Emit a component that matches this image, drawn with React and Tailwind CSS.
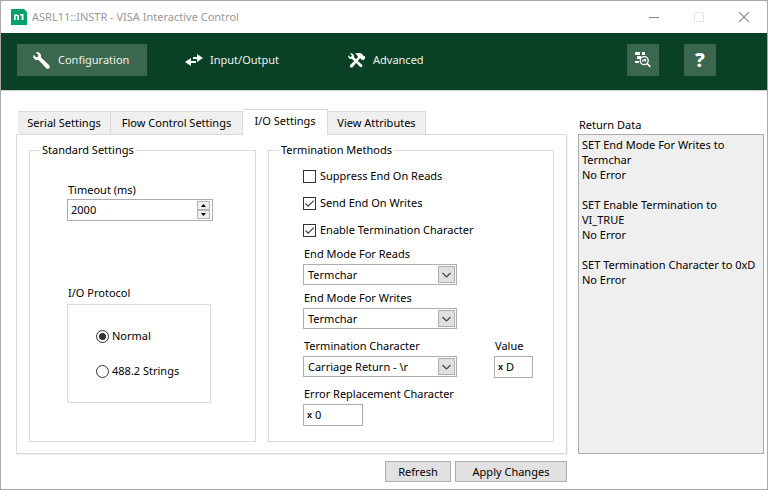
import React from 'react';

const WrenchIcon = () => (
  <svg width="17" height="17" viewBox="0 0 16 16" fill="#fff" aria-hidden="true">
    <path d="M2.6 0.5 L5 2.9 L4.6 4.6 L2.9 5 L0.5 2.6 C-0.1 4.4 0.3 5.8 1.3 6.7 C2.4 7.7 3.7 7.9 5 7.4 L12.4 15.2 C13.2 16 14.4 16 15.2 15.2 C16 14.4 16 13.2 15.2 12.4 L7.4 5 C7.9 3.7 7.7 2.3 6.7 1.3 C5.7 0.3 4.4 0 2.6 0.5 Z" />
  </svg>
);

const ArrowsIcon = () => (
  <svg width="18" height="12" viewBox="0 0 18 12" fill="#fff" aria-hidden="true">
    <path d="M12 0 L18 4 L12 8 V5 H8 V3 H12 Z" />
    <path d="M6 4 L0 8 L6 12 V9 H11 V7 H6 Z" />
  </svg>
);

const ToolsIcon = () => (
  <svg width="17" height="15" viewBox="0 0 17 15" fill="#fff" aria-hidden="true">
    <path d="M2 0.4 L3.8 2.2 L3.3 3.6 L2 4 L0.3 2.3 C-0.2 4.6 1.6 6.6 4 6 L12 13.8 C12.7 14.4 13.5 14.3 14 13.8 C14.6 13.2 14.6 12.4 14 11.8 L6 4.2 C6.6 1.8 4.4 -0.3 2 0.4 Z" />
    <path d="M7 0.8 C9.6 -0.3 12.8 -0.1 14.6 1.6 L15.4 2.7 L17 3.6 V5.4 L15.4 7.2 L13.8 6.8 L12.6 5.6 L11.8 5.6 L4.8 13.9 C4 14.8 2.8 14.7 2.2 14 C1.5 13.3 1.7 12.4 2.4 11.8 L9.8 4.4 C9.9 2.7 8.8 1.6 7 0.8 Z" />
  </svg>
);

const TraceIcon = () => (
  <svg width="16" height="16" viewBox="0 0 16 16" fill="#fff" aria-hidden="true">
    <path d="M0 0 H5 V3 H0 Z M7 0 H10 V3 H7 Z M2 4 H6 V7 H2 Z M0 9 H4 V11 H0 Z" />
    <circle cx="9.2" cy="8.6" r="4" fill="#3b674f" stroke="#fff" strokeWidth="1.3" />
    <path d="M7 9.5 V8 H8.5 V7 H11 V9.5 H9.5 V8.5 H8.5 V9.5 Z" />
    <path d="M12 11.4 L15.4 15" stroke="#fff" strokeWidth="1.6" />
  </svg>
);

const LogoIcon = () => (
  <svg width="16" height="16" viewBox="0 0 16 16" aria-hidden="true">
    <path d="M0 0 H13 L16 3 V16 H0 Z" fill="#03a06c" />
    <path d="M3 5.5 H6 C7.3 5.5 8 6.2 8 7.5 V11 H6.3 V7 H4.7 V11 H3 Z" fill="#fff" />
    <path d="M9 5 H12.5 V11 H10.6 V6.6 H9 Z" fill="#fff" />
  </svg>
);

const NAV_ITEMS = [
  { label: 'Configuration', icon: WrenchIcon, className: 'w-[130px] bg-[#3b674f]' },
  { label: 'Input/Output', icon: ArrowsIcon, className: 'w-[141px]' },
  { label: 'Advanced', icon: ToolsIcon, className: 'w-[130px]' },
];

const TABS = [
  { label: 'Serial Settings', className: 'w-[93px]' },
  { label: 'Flow Control Settings', className: 'w-[132px]' },
  { label: 'I/O Settings', className: 'w-[85px]', active: true },
  { label: 'View Attributes', className: 'w-[98px]' },
];

const RETURN_DATA = `SET End Mode For Writes to
Termchar
No Error

SET Enable Termination to
VI_TRUE
No Error

SET Termination Character to 0xD
No Error`;

function TitleBar() {
  return (
    <div className="flex h-8 items-center bg-white pl-[10px] pr-[18px] text-[#999]">
      <LogoIcon />
      <h1 className="ml-[5px] flex-1">ASRL11::INSTR - VISA Interactive Control</h1>
      <div className="flex items-center gap-[35px]">
        <button type="button" aria-label="Minimize">
          <svg width="10" height="10" viewBox="0 0 10 10"><path d="M0 5.5 H10" stroke="#888" /></svg>
        </button>
        <button type="button" aria-label="Maximize" disabled>
          <svg width="10" height="10" viewBox="0 0 10 10"><path d="M0.5 0.5 H9.5 V9.5 H0.5 Z" fill="none" stroke="#e6e6e6" /></svg>
        </button>
        <button type="button" aria-label="Close">
          <svg width="10" height="10" viewBox="0 0 10 10"><path d="M0 0 L10 10 M10 0 L0 10" stroke="#888" strokeWidth="1.1" /></svg>
        </button>
      </div>
    </div>
  );
}

function Toolbar() {
  return (
    <header className="flex h-[58px] items-center border-b border-[#d0d0d0] bg-[#0a4025] pb-[3px] pl-4 pr-[51px]">
      <nav className="flex flex-1 gap-[22px]">
        {NAV_ITEMS.map(({ label, icon: Icon, className }) => (
          <button key={label} type="button" className={`flex h-8 items-center pl-4 text-[#eef3f0] ${className}`}>
            <span className="flex w-[25px]"><Icon /></span>
            {label}
          </button>
        ))}
      </nav>
      <div className="flex gap-[25px]">
        <button type="button" aria-label="Trace" className="flex size-8 items-center justify-center bg-[#3b674f]">
          <TraceIcon />
        </button>
        <button type="button" aria-label="Help" className="flex size-8 items-center justify-center bg-[#3b674f] text-xl font-extrabold text-white">
          ?
        </button>
      </div>
    </header>
  );
}

function Group({ title, className, bodyClassName, children }) {
  return (
    <fieldset className={`border border-[#dadada] ${className}`}>
      <legend className="ml-[10px] px-[2px] leading-4">{title}</legend>
      <div className={bodyClassName}>{children}</div>
    </fieldset>
  );
}

function Check({ id, label, defaultChecked }) {
  return (
    <div className="flex items-center gap-1">
      <span className="grid size-[13px]">
        <input
          id={id}
          type="checkbox"
          defaultChecked={defaultChecked}
          className="peer col-start-1 row-start-1 size-[13px] appearance-none border border-[#333] bg-white"
        />
        <svg
          viewBox="0 0 13 13"
          className="pointer-events-none invisible col-start-1 row-start-1 size-[13px] peer-checked:visible"
        >
          <path d="M2.5 6.5 L5.2 9.2 L10.8 3.6" fill="none" stroke="#444" strokeWidth="1.2" />
        </svg>
      </span>
      <label htmlFor={id}>{label}</label>
    </div>
  );
}

function Radio({ id, label, defaultChecked }) {
  return (
    <div className="flex items-center gap-[3px]">
      <input
        id={id}
        type="radio"
        name="protocol"
        defaultChecked={defaultChecked}
        className="size-[13px] appearance-none rounded-full border border-[#333] bg-white bg-clip-content p-[2px] checked:bg-[#333]"
      />
      <label htmlFor={id}>{label}</label>
    </div>
  );
}

function Select({ id, label, options }) {
  return (
    <div className="flex w-[154px] flex-col gap-[2px]">
      <label htmlFor={id} className="pl-px">{label}</label>
      <div className="grid h-[21px] items-center border border-[#abadb3] bg-white">
        <select id={id} className="col-start-1 row-start-1 w-full appearance-none pl-1 pr-5 leading-4">
          {options.map((option) => (
            <option key={option}>{option}</option>
          ))}
        </select>
        <span className="pointer-events-none col-start-1 row-start-1 mr-px flex h-[17px] w-[17px] items-center justify-center justify-self-end border border-[#abadb3] bg-[#e1e1e1]">
          <svg width="9" height="6" viewBox="0 0 9 6"><path d="M0.5 1 L4.5 5 L8.5 1" fill="none" stroke="#444" strokeWidth="1.2" /></svg>
        </span>
      </div>
    </div>
  );
}

function HexInput({ id, label, value, className }) {
  return (
    <div className="flex flex-col gap-[2px]">
      <label htmlFor={id} className="pl-px">{label}</label>
      <div className={`flex h-[22px] items-center gap-[3px] border border-[#abadb3] bg-white pl-[3px] ${className}`}>
        <span className="text-[9px] font-semibold">x</span>
        <input id={id} defaultValue={value} className="w-full min-w-0" />
      </div>
    </div>
  );
}

function StandardSettings() {
  return (
    <Group title="Standard Settings" className="w-[227px]" bodyClassName="pl-[37px]">
      <div className="mt-6 flex flex-col gap-px">
        <label htmlFor="timeout" className="pl-px">Timeout (ms)</label>
        <div className="flex h-[22px] w-[146px] items-center border border-[#abadb3] bg-white pl-[3px] pr-[2px]">
          <input id="timeout" defaultValue="2000" inputMode="numeric" className="min-w-0 flex-1" />
          <div className="flex w-[13px] flex-col">
            <button type="button" aria-label="Increase" className="flex h-[9px] items-center justify-center border border-[#b4b4b4] bg-[#f0f0f0]">
              <svg width="5" height="3" viewBox="0 0 5 3"><path d="M0 3 L2.5 0 L5 3 Z" /></svg>
            </button>
            <button type="button" aria-label="Decrease" className="flex h-[9px] items-center justify-center border border-[#b4b4b4] bg-[#f0f0f0]">
              <svg width="5" height="3" viewBox="0 0 5 3"><path d="M0 0 L2.5 3 L5 0 Z" /></svg>
            </button>
          </div>
        </div>
      </div>
      <div role="radiogroup" aria-labelledby="protocol-label" className="mt-16 flex flex-col gap-[3px]">
        <span id="protocol-label" className="pl-px">I/O Protocol</span>
        <div className="flex h-[99px] w-[144px] flex-col justify-center gap-[19px] border border-[#dadada] pl-7">
          <Radio id="protocol-normal" label="Normal" defaultChecked />
          <Radio id="protocol-488" label="488.2 Strings" />
        </div>
      </div>
    </Group>
  );
}

function TerminationMethods() {
  return (
    <Group title="Termination Methods" className="min-w-0 flex-1" bodyClassName="pl-[34px]">
      <div className="mt-[10px] flex flex-col gap-[11px]">
        <Check id="suppress-end" label="Suppress End On Reads" />
        <Check id="send-end" label="Send End On Writes" defaultChecked />
        <Check id="enable-term" label="Enable Termination Character" defaultChecked />
      </div>
      <div className="mt-2 flex flex-col gap-[5px]">
        <Select id="end-reads" label="End Mode For Reads" options={['Termchar', 'None']} />
        <Select id="end-writes" label="End Mode For Writes" options={['Termchar', 'None']} />
      </div>
      <div className="mt-[9px] flex gap-[37px]">
        <Select id="term-char" label="Termination Character" options={['Carriage Return - \\r', 'Line Feed - \\n']} />
        <HexInput id="term-value" label="Value" value="D" className="w-[39px]" />
      </div>
      <div className="mt-2">
        <HexInput id="error-char" label="Error Replacement Character" value="0" className="w-[60px]" />
      </div>
    </Group>
  );
}

export default function App() {
  return (
    <div className="flex min-h-screen flex-col border border-[#a9a9a9] bg-white font-['Noto_Sans',sans-serif] text-[11px] leading-4 text-black">
      <TitleBar />
      <Toolbar />
      <main className="flex flex-1 gap-[11px] pb-[7px] pl-[15px] pr-[3px] pt-[18px]">
        <div className="flex min-w-0 flex-1 flex-col">
          <div role="tablist" className="flex items-end pl-[2px]">
            {TABS.map(({ label, className, active }) => (
              <button
                key={label}
                type="button"
                role="tab"
                aria-selected={!!active}
                className={`whitespace-nowrap border-r border-t border-[#dadada] ${className} ${active ? 'z-10 -mb-px h-[26px] bg-white pb-[3px]' : 'h-[23px] bg-[#efefef]'}`}
              >
                {label}
              </button>
            ))}
          </div>
          <section role="tabpanel" className="flex flex-1 gap-3 border border-[#dadada] px-3 pb-[11px] pt-[7px] shadow-[1px_1px_0_#efefef]">
            <StandardSettings />
            <TerminationMethods />
          </section>
          <div className="mt-[7px] flex justify-end gap-1">
            <button type="button" className="h-[21px] w-[66px] border border-[#adadad] bg-[#e1e1e1]">Refresh</button>
            <button type="button" className="h-[21px] w-[112px] border border-[#adadad] bg-[#e1e1e1]">Apply Changes</button>
          </div>
        </div>
        <div className="flex w-[186px] flex-col pb-7 pt-2">
          <label htmlFor="return-data" className="mb-px pl-px">Return Data</label>
          <textarea
            id="return-data"
            readOnly
            value={RETURN_DATA}
            className="flex-1 resize-none overflow-hidden border border-[#abadb3] bg-[#efefef] px-[3px] py-[2px] leading-[15px]"
          />
        </div>
      </main>
    </div>
  );
}
